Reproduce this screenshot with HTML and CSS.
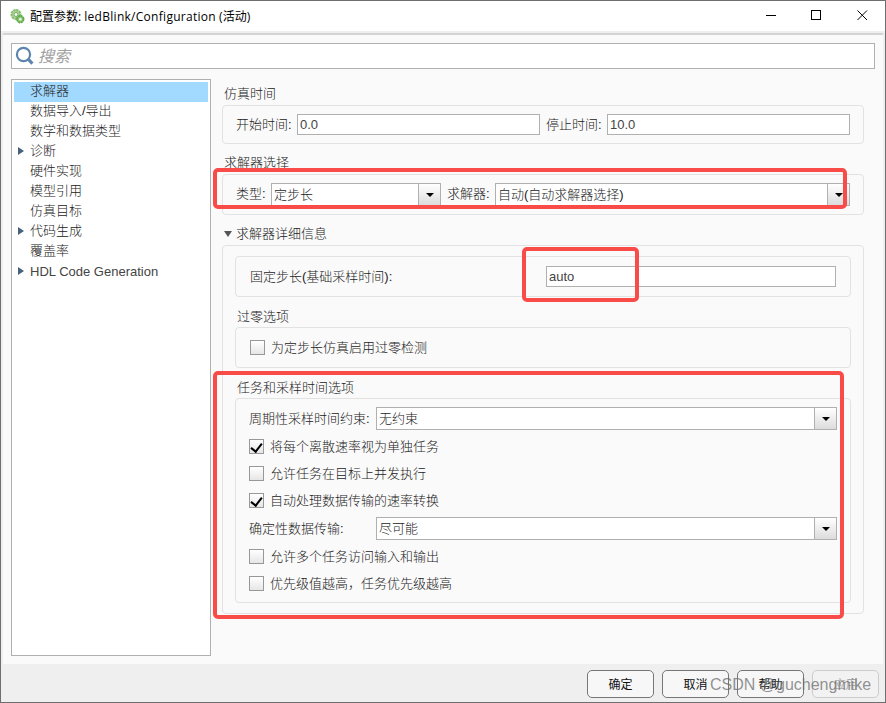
FILE: index.html
```html
<!DOCTYPE html>
<html lang="zh-CN">
<head>
    <meta charset="UTF-8">
    <meta name="viewport" content="width=device-width, initial-scale=1.0">
    <title>配置参数: ledBlink/Configuration (活动)</title>
    <link rel="stylesheet" href="styles.css">
</head>
<body>
    <div class="window">
        <header class="titlebar">
            <svg class="app-icon" width="15" height="15" viewBox="0 0 15 15">
                <circle cx="6" cy="5.5" r="4.4" fill="#b9dca6" stroke="#86bd70" stroke-width="2.2" stroke-dasharray="2.4 .5"/>
                <circle cx="6" cy="5.5" r="2" fill="#f4fbf0" stroke="#72a95c"/>
                <circle cx="10.3" cy="10.2" r="3.2" fill="#9ad182" stroke="#5fa84b" stroke-width="2" stroke-dasharray="2 .5"/>
                <circle cx="10.3" cy="10.2" r="1.3" fill="#e5f6dc"/>
            </svg>
            <span class="title">配置参数: <span class="latin">ledBlink/Configuration</span> (活动)</span>
            <svg class="window-buttons" width="104" height="12" viewBox="0 0 104 12" fill="none" stroke="#000">
                <path d="M0 6.5H10"/>
                <rect x="45.5" y="1.5" width="9" height="9"/>
                <path d="M91.5 1.5L101 11M101 1.5L91.5 11"/>
            </svg>
        </header>

        <main class="content">
            <div class="search">
                <svg width="20" height="20" viewBox="0 0 20 20" fill="none" stroke="#5b85b0">
                    <circle cx="8.5" cy="8.5" r="6.6" stroke-width="2.2"/>
                    <path d="M13 13L17.4 17.6" stroke-width="3.2"/>
                </svg>
                <span>搜索</span>
            </div>

            <div class="columns">
                <ul class="tree">
                    <li class="selected">求解器</li>
                    <li>数据导入/导出</li>
                    <li>数学和数据类型</li>
                    <li class="parent">诊断</li>
                    <li>硬件实现</li>
                    <li>模型引用</li>
                    <li>仿真目标</li>
                    <li class="parent">代码生成</li>
                    <li>覆盖率</li>
                    <li class="parent"><span class="hdl">HDL Code Generation</span></li>
                </ul>

                <div class="settings">
                    <h2>仿真时间</h2>
                    <div class="group time">
                        <label>开始时间:</label>
                        <input type="text" value="0.0">
                        <label>停止时间:</label>
                        <input type="text" value="10.0">
                    </div>

                    <h2 class="select-title">求解器选择</h2>
                    <div class="group solver">
                        <label>类型:</label>
                        <div class="combo"><span>定步长</span><i></i></div>
                        <label>求解器:</label>
                        <div class="combo"><span>自动(自动求解器选择)</span><i></i></div>
                    </div>

                    <h2 class="details-title">求解器详细信息</h2>
                    <div class="group details">
                        <div class="group step">
                            <label>固定步长(基础采样时间):</label>
                            <input type="text" value="auto">
                        </div>

                        <h3>过零选项</h3>
                        <div class="group zero">
                            <div class="check"><i></i><span>为定步长仿真启用过零检测</span></div>
                        </div>

                        <h3>任务和采样时间选项</h3>
                        <div class="group tasks">
                            <div class="row">
                                <label>周期性采样时间约束:</label>
                                <div class="combo"><span>无约束</span><i></i></div>
                            </div>
                            <div class="check checked"><i></i><span>将每个离散速率视为单独任务</span></div>
                            <div class="check"><i></i><span>允许任务在目标上并发执行</span></div>
                            <div class="check checked"><i></i><span>自动处理数据传输的速率转换</span></div>
                            <div class="row">
                                <label>确定性数据传输:</label>
                                <div class="combo"><span>尽可能</span><i></i></div>
                            </div>
                            <div class="check"><i></i><span>允许多个任务访问输入和输出</span></div>
                            <div class="check"><i></i><span>优先级值越高，任务优先级越高</span></div>
                        </div>
                    </div>
                </div>
            </div>
        </main>

        <footer class="footer">
            <button>确定</button>
            <button>取消</button>
            <button>帮助</button>
            <button disabled>应用</button>
        </footer>

        <!-- highlights -->
        <div class="mark mark-solver"></div>
        <div class="mark mark-step"></div>
        <div class="mark mark-tasks"></div>
        <div class="watermark">CSDN @guchengmike</div>
    </div>
</body>
</html>
```

FILE: styles.css
```css
* {
    box-sizing: border-box;
}
body {
    margin: 0;
    font-family: "Liberation Sans", "Noto Sans CJK SC", sans-serif;
    font-size: 13px;
    font-weight: 300;
    color: #222222;
}
.window {
    position: relative;
    display: flex;
    flex-direction: column;
    width: 886px;
    height: 703px;
    border: 1px solid #6e6e6e;
    background: #efefef;
    overflow: hidden;
}
.titlebar {
    display: flex;
    align-items: center;
    height: 30px;
    padding: 0 15px 0 9px;
    background: #ffffff;
    color: #000000;
    font-family: "Open Sans", "Noto Sans CJK SC", sans-serif;
    font-size: 12px;
    font-weight: normal;
}
.title {
    flex: 1;
    margin-left: 5px;
    margin-top: -1px;
    white-space: nowrap;
}
.latin {
    letter-spacing: 0.28px;
}
.window-buttons {
    margin-top: -2px;
}
.content {
    flex: 1;
    margin: 2px 2px 0;
    padding: 8px;
    border-top: 2px solid #d3d3d3;
    background: #fafafa;
}
.search {
    display: flex;
    align-items: center;
    width: 864px;
    height: 26px;
    padding-left: 3px;
    border: 1px solid #b0b0b0;
    background: #ffffff;
    color: #a0a0a0;
    font-size: 16px;
    font-style: italic;
    font-weight: normal;
}
.search span {
    margin-left: 3px;
    padding-top: 2px;
    line-height: 24px;
}
.columns {
    display: flex;
    margin-top: 10px;
}
.tree {
    width: 200px;
    height: 577px;
    margin: 0;
    padding: 2px;
    border: 1px solid #b0b0b0;
    background: #ffffff;
    list-style: none;
}
.tree li {
    display: flex;
    align-items: center;
    height: 20px;
    padding-left: 16px;
    line-height: 18px;
    padding-bottom: 2px;
}
.tree li .hdl {
    padding-top: 1px;
    color: #444444;
}
.tree .selected {
    background: #a2daff;
}
.tree .parent {
    padding-left: 4px;
}
.tree .parent::before {
    content: "";
    margin-right: 6px;
    border-left: 6px solid #49627c;
    border-top: 4px solid transparent;
    border-bottom: 4px solid transparent;
}
.settings {
    width: 642px;
    margin-left: 11px;
}
h2, h3 {
    margin: 0;
    font-size: 13px;
    font-weight: inherit;
    line-height: 20px;
}
h2 {
    height: 21px;
    margin-top: 5px;
    padding-left: 2px;
}
.settings h2:first-child {
    height: 22px;
    margin-top: 4px;
    padding-top: 1px;
}
.settings .select-title {
    height: 21px;
    margin-top: 9px;
}
.settings .details-title {
    display: flex;
    align-items: center;
    height: 22px;
    margin-top: 8px;
}
.details-title::before {
    content: "";
    margin-right: 4px;
    border-top: 6px solid #555555;
    border-left: 4px solid transparent;
    border-right: 4px solid transparent;
}
h3 {
    height: 20px;
    margin-top: 10px;
    padding-left: 2px;
    line-height: 19px;
}
.group {
    border: 1px solid #e2e2e2;
    border-radius: 4px;
}
.group label {
    line-height: 22px;
    white-space: nowrap;
}
.group input {
    height: 21px;
    padding: 0 2px;
    border: 1px solid #b0b0b0;
    background: #ffffff;
    color: #444444;
    font-family: inherit;
    font-size: 13px;
}
.time {
    display: grid;
    grid-template-columns: 61px 243px 67px 243px;
    height: 39px;
    padding: 8px 13px;
}
.time label:nth-of-type(2) {
    padding-left: 6px;
}
.solver {
    display: grid;
    grid-template-columns: 35px 170px 54px 355px;
    height: 41px;
    padding: 8px 13px;
}
.solver label:nth-of-type(2) {
    padding-left: 6px;
}
.combo {
    display: flex;
    height: 23px;
    border: 1px solid #b0b0b0;
    background: #ffffff;
}
.combo span {
    flex: 1;
    padding-left: 2px;
    line-height: 22px;
}
.combo i {
    display: flex;
    align-items: center;
    justify-content: center;
    width: 22px;
    border-left: 1px solid #b0b0b0;
    background: linear-gradient(#ffffff, #dcdcdc);
}
.combo i::before {
    content: "";
    border-top: 4px solid #000000;
    border-left: 4px solid transparent;
    border-right: 4px solid transparent;
}
.details {
    height: 369px;
    padding: 10px 12px;
}
.step {
    display: flex;
    justify-content: space-between;
    height: 41px;
    padding: 9px 14px;
}
.step input {
    width: 290px;
}
.zero {
    height: 41px;
    padding: 6px 14px;
}
.tasks {
    height: 205px;
    padding: 8px 13px;
}
.row {
    display: grid;
    grid-template-columns: 127px 461px;
    height: 26px;
}
.row label {
    line-height: 24px;
}
.check {
    display: flex;
    align-items: center;
    height: 27px;
}
.check span {
    padding-bottom: 2px;
}
.check + .row {
    margin-top: 3px;
}
.check i {
    width: 15px;
    height: 15px;
    margin-right: 6px;
    border: 1px solid #989898;
    background: linear-gradient(#ffffff, #e6e6e6);
}
.checked i::before {
    content: "";
    display: block;
    width: 5px;
    height: 9px;
    margin: 1px auto 0;
    border: solid #000000;
    border-width: 0 2px 2px 0;
    transform: rotate(38deg);
}
.footer {
    display: flex;
    justify-content: flex-end;
    gap: 8px;
    height: 38px;
    padding: 6px 6px 0 0;
}
.footer button {
    width: 67px;
    height: 28px;
    padding: 0 0 2px;
    border: 1px solid #777777;
    border-radius: 5px;
    background: #f7f7f7;
    color: #111111;
    font-family: inherit;
    font-size: 12px;
}
.footer button:disabled {
    border-color: #cccccc;
    background: #f2f2f2;
    color: #aaaaaa;
}
.mark {
    position: absolute;
    border: 4px solid #f94c48;
    border-radius: 5px;
}
.mark-solver {
    left: 212px;
    top: 167px;
    width: 634px;
    height: 41px;
}
.mark-step {
    left: 521px;
    top: 246px;
    width: 117px;
    height: 55px;
}
.mark-tasks {
    left: 212px;
    top: 370px;
    width: 631px;
    height: 248px;
}
.watermark {
    position: absolute;
    left: 709px;
    top: 674px;
    color: rgba(110, 110, 110, 0.75);
    font-size: 16px;
    line-height: 20px;
}
```
